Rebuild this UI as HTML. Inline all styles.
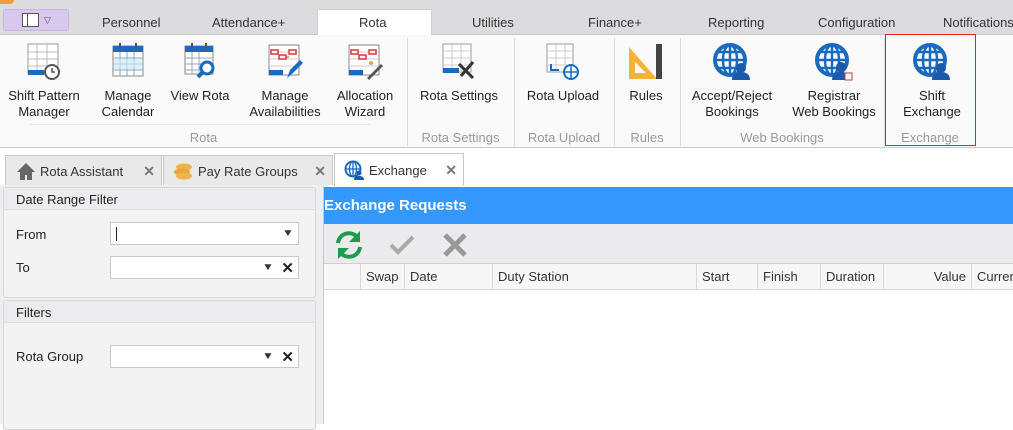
<!DOCTYPE html>
<html><head><style>
*{margin:0;padding:0;box-sizing:border-box}
body{width:1013px;height:424px;overflow:hidden;background:#fff;font-family:"Liberation Sans",sans-serif;font-size:13px;color:#222;position:relative}
.a{position:absolute}
.tab{position:absolute;top:15px;font-size:13px;color:#333}
.btn{position:absolute;top:42px;text-align:center;font-size:13px;line-height:16px;color:#222}
.btn svg{display:block;margin:0 auto 6px}
.gl{position:absolute;top:130px;font-size:13px;color:#999;text-align:center}
.sep{position:absolute;top:38px;width:1px;height:108px;background:#dadada}
.dt{position:absolute;top:155px;height:30px;border:1px solid #c8c8c8;border-bottom:none;background:#e9e9ea;font-size:13px;color:#333;padding:8px 0 0 34px}
.dt .x{position:absolute;right:6px;top:7px;font-weight:bold;color:#777;font-size:14px}
.inp{position:absolute;left:110px;width:189px;height:23px;border:1px solid #c9c9c9;background:#fff}
.inp .dd{position:absolute;top:5px;font-size:10px;color:#333;transform:scaleX(1.2)}
.inp .xx{position:absolute;right:4px;top:2px;font-weight:bold;font-size:15px;color:#222}
.col{position:absolute;top:264px;height:26px;border-left:1px solid #d8d8d8;font-size:13px;padding:5px 0 0 5px;color:#333}
</style></head><body>
<div class="a" style="left:0;top:0;width:1013px;height:35px;background:#dcdcde;border-bottom:1px solid #c6c6c6"></div>
<div class="a" style="left:0;top:0;width:14px;height:4px;background:#f39a3c;border-radius:0 0 8px 0"></div>
<div class="a" style="left:3px;top:9px;width:66px;height:22px;background:#d9c8ee;border:1px solid #c8b8de;border-radius:2px"></div>
<div class="a" style="left:22px;top:13px;width:17px;height:14px;border:1px solid #555;background:#fff"></div>
<div class="a" style="left:27px;top:13px;width:1px;height:14px;background:#555"></div>
<div class="a" style="left:44px;top:15px;font-size:9px;color:#555">▽</div>
<div class="tab" style="left:102px">Personnel</div>
<div class="tab" style="left:212px">Attendance+</div>
<div class="a" style="left:317px;top:9px;width:115px;height:28px;background:#fff;border:1px solid #cfcfcf;border-bottom:none"></div>
<div class="tab" style="left:359px">Rota</div>
<div class="tab" style="left:472px">Utilities</div>
<div class="tab" style="left:588px">Finance+</div>
<div class="tab" style="left:708px">Reporting</div>
<div class="tab" style="left:818px">Configuration</div>
<div class="tab" style="left:943px">Notifications</div>
<div class="a" style="left:0;top:35px;width:1013px;height:113px;background:#fafafa;border-bottom:1px solid #c9c9c9"></div>
<div class="a" style="left:30px;top:124px;width:340px;height:1px;background:#e6e6e6"></div>
<div class="sep" style="left:407px"></div><div class="sep" style="left:514px"></div><div class="sep" style="left:614px"></div><div class="sep" style="left:680px"></div><div class="sep" style="left:884px"></div>

<div class="btn" style="left:4px;width:80px"><svg width="38" height="40" viewBox="0 0 38 40"><rect x="3" y="2" width="30" height="30" fill="#fff" stroke="#999"/><path d="M3 10h30M3 17h30M3 24h30M12 2v30M22 2v30" stroke="#bbb"/><rect x="3" y="28" width="16" height="5" fill="#1a6bc0"/><circle cx="27" cy="30" r="7" fill="#fff" stroke="#555" stroke-width="2"/><path d="M27 26v4h3" stroke="#555" stroke-width="1.5" fill="none"/></svg>Shift Pattern<br>Manager</div>
<div class="btn" style="left:94px;width:68px"><svg width="38" height="40" viewBox="0 0 38 40"><rect x="4" y="4" width="30" height="30" fill="#fff" stroke="#888"/><rect x="4" y="4" width="30" height="6" fill="#1a6bc0"/><path d="M4 16h30M4 22h30M4 28h30M11 10v24M18 10v24M25 10v24" stroke="#7ab"/><rect x="5" y="17" width="28" height="10" fill="#cfe6f7" opacity=".7"/><path d="M11 1v6M27 1v6" stroke="#555" stroke-width="2"/></svg>Manage<br>Calendar</div>
<div class="btn" style="left:168px;width:64px"><svg width="38" height="40" viewBox="0 0 38 40"><rect x="4" y="4" width="28" height="28" fill="#fff" stroke="#888"/><rect x="4" y="4" width="28" height="6" fill="#1a6bc0"/><path d="M4 16h28M4 22h28M4 28h28M11 10v22M18 10v22" stroke="#9ab"/><path d="M11 1v6M25 1v6" stroke="#555" stroke-width="2"/><circle cx="26" cy="26" r="6" fill="#fff" stroke="#1a6bc0" stroke-width="3"/><path d="M22 30l-5 5" stroke="#1a6bc0" stroke-width="4"/></svg>View Rota</div>
<div class="btn" style="left:243px;width:84px"><svg width="40" height="40" viewBox="0 0 40 40"><rect x="4" y="3" width="30" height="30" fill="#fff" stroke="#888"/><path d="M4 10h30M4 17h30M4 24h30" stroke="#ccc"/><rect x="6" y="8" width="7" height="4" fill="#fff" stroke="#d33" stroke-width="1.5"/><rect x="14" y="13" width="7" height="4" fill="#fff" stroke="#d33" stroke-width="1.5"/><rect x="24" y="8" width="7" height="4" fill="#fff" stroke="#d33" stroke-width="1.5"/><path d="M13 10h1M21 15h3" stroke="#d33"/><rect x="4" y="28" width="14" height="5" fill="#1a6bc0"/><path d="M22 36l3-8 10-10 3 3-10 10z" fill="#1a6bc0"/></svg>Manage<br>Availabilities</div>
<div class="btn" style="left:332px;width:66px"><svg width="40" height="40" viewBox="0 0 40 40"><rect x="4" y="3" width="30" height="30" fill="#fff" stroke="#888"/><path d="M4 10h30M4 17h30M4 24h30" stroke="#ccc"/><rect x="6" y="8" width="7" height="4" fill="#fff" stroke="#d33" stroke-width="1.5"/><rect x="14" y="13" width="7" height="4" fill="#fff" stroke="#d33" stroke-width="1.5"/><rect x="24" y="8" width="7" height="4" fill="#fff" stroke="#d33" stroke-width="1.5"/><rect x="4" y="28" width="14" height="5" fill="#1a6bc0"/><path d="M22 36l14-14 2 2-14 14z" fill="#555"/><circle cx="26" cy="21" r="2" fill="#f3a33c"/></svg>Allocation<br>Wizard</div>
<div class="btn" style="left:414px;width:90px"><svg width="40" height="40" viewBox="0 0 40 40"><rect x="4" y="2" width="28" height="28" fill="#fff" stroke="#999"/><path d="M4 9h28M4 16h28M4 23h28M13 2v28M22 2v28" stroke="#ccc"/><rect x="4" y="26" width="16" height="5" fill="#1a6bc0"/><path d="M20 22l14 14M34 20l-12 14" stroke="#333" stroke-width="3"/></svg>Rota Settings</div>
<div class="btn" style="left:522px;width:82px"><svg width="40" height="40" viewBox="0 0 40 40"><rect x="4" y="2" width="26" height="28" fill="#fff" stroke="#999"/><path d="M4 9h26M4 16h26M4 23h26M13 2v28M22 2v28" stroke="#ccc"/><path d="M8 22v6h8" stroke="#1a6bc0" stroke-width="2" fill="none"/><circle cx="28" cy="30" r="7" fill="#fff" stroke="#1a6bc0" stroke-width="2"/><path d="M21 30h14M28 23v14" stroke="#1a6bc0" stroke-width="1.5"/></svg>Rota Upload</div>
<div class="btn" style="left:622px;width:48px"><svg width="40" height="40" viewBox="0 0 40 40"><path d="M3 5v32h28z" fill="#f5b335"/><path d="M9 20v11h11z" fill="#fafafa"/><rect x="30" y="2" width="6" height="35" fill="#444"/></svg>Rules</div>
<div class="btn" style="left:688px;width:88px"><svg width="40" height="40" viewBox="0 0 40 40"><circle cx="18" cy="18" r="15" fill="#fff" stroke="#1a6bc0" stroke-width="4"/><path d="M3 18h30M18 3v30M6 10h24M6 26h24" stroke="#1a6bc0" stroke-width="2.5"/><ellipse cx="18" cy="18" rx="7" ry="15" fill="none" stroke="#1a6bc0" stroke-width="2.5"/><circle cx="29" cy="26" r="5" fill="#1a5aa8"/><path d="M20 38c0-6 4-8 9-8s9 2 9 8z" fill="#1a5aa8"/></svg>Accept/Reject<br>Bookings</div>
<div class="btn" style="left:788px;width:92px"><svg width="40" height="40" viewBox="0 0 40 40"><circle cx="18" cy="18" r="15" fill="#fff" stroke="#1a6bc0" stroke-width="4"/><path d="M3 18h30M18 3v30M6 10h24M6 26h24" stroke="#1a6bc0" stroke-width="2.5"/><ellipse cx="18" cy="18" rx="7" ry="15" fill="none" stroke="#1a6bc0" stroke-width="2.5"/><circle cx="27" cy="25" r="5" fill="#1a5aa8"/><path d="M18 38c0-6 4-8 9-8s9 2 9 8z" fill="#1a5aa8"/><rect x="31" y="31" width="7" height="7" fill="#fff" stroke="#c33"/></svg>Registrar<br>Web Bookings</div>
<div class="btn" style="left:892px;width:80px"><svg width="40" height="40" viewBox="0 0 40 40"><circle cx="18" cy="18" r="15" fill="#fff" stroke="#1a6bc0" stroke-width="4"/><path d="M3 18h30M18 3v30M6 10h24M6 26h24" stroke="#1a6bc0" stroke-width="2.5"/><ellipse cx="18" cy="18" rx="7" ry="15" fill="none" stroke="#1a6bc0" stroke-width="2.5"/><circle cx="29" cy="26" r="5" fill="#1a5aa8"/><path d="M20 38c0-6 4-8 9-8s9 2 9 8z" fill="#1a5aa8"/></svg>Shift<br>Exchange</div>
<div class="gl" style="left:0;width:407px">Rota</div>
<div class="gl" style="left:407px;width:107px">Rota Settings</div>
<div class="gl" style="left:514px;width:100px">Rota Upload</div>
<div class="gl" style="left:614px;width:66px">Rules</div>
<div class="gl" style="left:680px;width:204px">Web Bookings</div>
<div class="gl" style="left:884px;width:92px">Exchange</div>
<div class="a" style="left:885px;top:34px;width:91px;height:112px;border:1.5px solid #e52222"></div>
<div class="dt" style="left:5px;width:157px">Rota Assistant<span class="x">✕</span></div>
<svg class="a" style="left:16px;top:162px" width="20" height="18"><path d="M10 1L1 10h3v8h5v-5h2v5h5v-8h3z" fill="#666"/></svg>
<div class="dt" style="left:163px;width:170px">Pay Rate Groups<span class="x">✕</span></div>
<svg class="a" style="left:172px;top:162px" width="22" height="18"><ellipse cx="12" cy="5" rx="8" ry="3.5" fill="#f0b24a"/><ellipse cx="10" cy="10" rx="8" ry="3.5" fill="#e9a43a"/><ellipse cx="12" cy="14" rx="8" ry="3.5" fill="#f0b24a"/></svg>
<div class="dt" style="left:334px;top:153px;width:130px;height:33px;background:#fff;padding-top:9px">Exchange<span class="x" style="top:8px">✕</span></div>
<svg class="a" style="left:344px;top:160px" width="22" height="20"><circle cx="9" cy="9" r="7.5" fill="#fff" stroke="#1a6bc0" stroke-width="2"/><path d="M1.5 9h15M9 1.5v15" stroke="#1a6bc0" stroke-width="1.3"/><ellipse cx="9" cy="9" rx="3.5" ry="7.5" fill="none" stroke="#1a6bc0" stroke-width="1.3"/><circle cx="15" cy="13" r="2.5" fill="#1a5aa8"/><path d="M10 20c0-3 2-4 5-4s5 1 5 4z" fill="#1a5aa8"/></svg>
<div class="a" style="left:0;top:185px;width:323px;height:239px;background:#eeeef0"></div>
<div class="a" style="left:3px;top:187px;width:313px;height:111px;background:#f3f3f4;border:1px solid #d6d6d6;border-radius:3px"></div>
<div class="a" style="left:4px;top:188px;width:311px;height:22px;background:#ececee;border-bottom:1px solid #dedede"></div>
<div class="a" style="left:16px;top:192px">Date Range Filter</div>
<div class="a" style="left:16px;top:227px">From</div>
<div class="inp" style="top:222px"><span class="a" style="left:5px;top:4px;width:1px;height:14px;background:#222"></span><span class="dd" style="right:5px">▼</span></div>
<div class="a" style="left:16px;top:260px">To</div>
<div class="inp" style="top:256px"><span class="dd" style="right:25px">▼</span><span class="xx">✕</span></div>
<div class="a" style="left:3px;top:300px;width:313px;height:130px;background:#f3f3f4;border:1px solid #d6d6d6;border-radius:3px"></div>
<div class="a" style="left:4px;top:301px;width:311px;height:22px;background:#ececee;border-bottom:1px solid #dedede"></div>
<div class="a" style="left:16px;top:305px">Filters</div>
<div class="a" style="left:16px;top:349px">Rota Group</div>
<div class="inp" style="top:345px"><span class="dd" style="right:25px">▼</span><span class="xx">✕</span></div>
<div class="a" style="left:323px;top:186px;width:1px;height:238px;background:#c9c9c9"></div>
<div class="a" style="left:324px;top:187px;width:689px;height:37px;background:#3399ff"></div>
<div class="a" style="left:324px;top:197px;color:#fff;font-weight:bold;font-size:15px">Exchange Requests</div>
<div class="a" style="left:324px;top:224px;width:689px;height:40px;background:#ebebee;border-bottom:1px solid #cfcfcf"></div>
<svg class="a" style="left:333px;top:229px" width="32" height="32" viewBox="0 0 32 32"><path d="M5 14A11 11 0 0 1 25 9" fill="none" stroke="#1a9e4a" stroke-width="4"/><path d="M27 2v11H16z" fill="#1a9e4a"/><path d="M27 18A11 11 0 0 1 7 23" fill="none" stroke="#1a9e4a" stroke-width="4"/><path d="M5 30V19h11z" fill="#1a9e4a"/></svg>
<svg class="a" style="left:388px;top:233px" width="28" height="24"><path d="M3 12l7 7L25 4" fill="none" stroke="#aaa" stroke-width="4"/></svg>
<svg class="a" style="left:442px;top:232px" width="26" height="26"><path d="M3 3l20 20M23 3L3 23" stroke="#999" stroke-width="5"/></svg>
<div class="a" style="left:324px;top:264px;width:689px;height:26px;background:#f7f7f8;border-bottom:1px solid #d8d8d8"></div>
<div class="col" style="left:360px">Swap</div>
<div class="col" style="left:404px">Date</div>
<div class="col" style="left:492px">Duty Station</div>
<div class="col" style="left:696px">Start</div>
<div class="col" style="left:757px">Finish</div>
<div class="col" style="left:820px">Duration</div>
<div class="col" style="left:883px;width:88px;text-align:right;padding-right:5px">Value</div>
<div class="col" style="left:971px">Currency</div>
</body></html>
